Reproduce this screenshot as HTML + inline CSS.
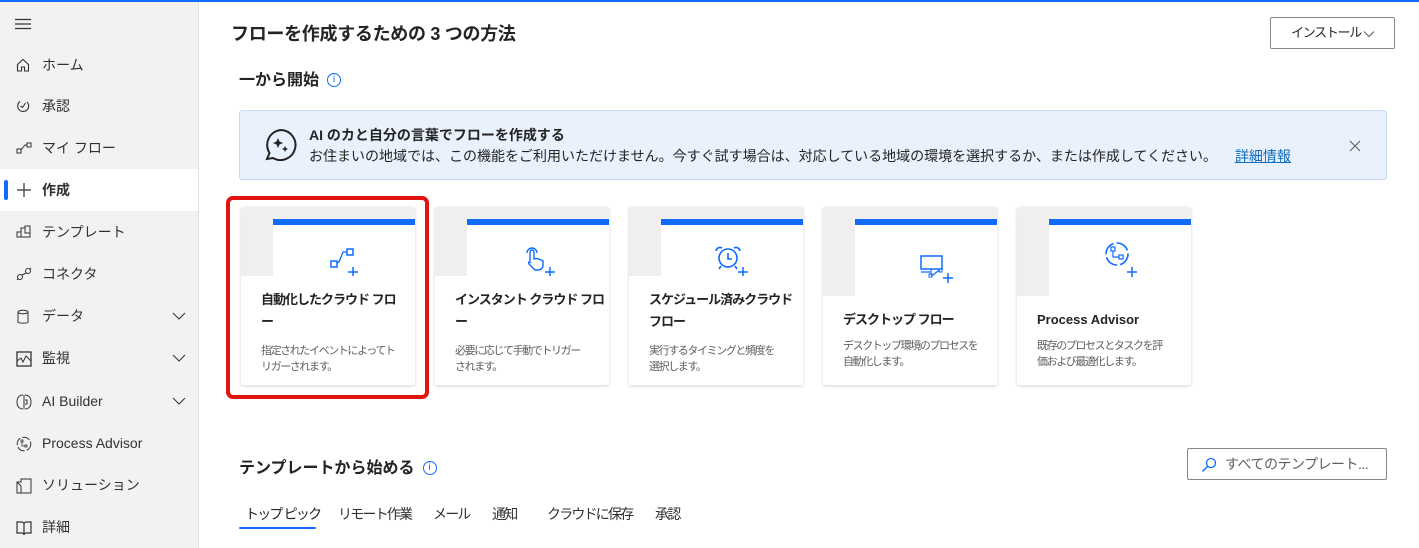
<!DOCTYPE html>
<html><head><meta charset="utf-8"><style>
*{box-sizing:border-box;margin:0;padding:0}
body{width:1419px;height:548px;overflow:hidden;background:#fff;font-family:"Liberation Sans","Noto Sans CJK JP",sans-serif;color:#242424;position:relative}
.topline{position:absolute;left:0;top:0;width:1419px;height:2px;background:#0f6cfd}
.side{position:absolute;left:0;top:0;width:199px;height:548px;background:#f3f2f1;border-right:1px solid #e1dfdd}
.item{position:absolute;left:0;width:198px;height:42px;font-size:14px;line-height:42px;color:#323130}
.item .tx{position:absolute;left:42px;top:0}
.item svg{position:absolute;left:16px;top:14px}
.item .chev{position:absolute;left:172px;top:16px}
.sel{background:#fff;font-weight:bold}
.sel:before{content:"";position:absolute;left:4px;top:11px;width:4px;height:20px;border-radius:2px;background:#0f6cfd}
.abs{position:absolute}
h1{position:absolute;left:231px;top:20px;font-size:18px;font-weight:bold;white-space:nowrap;letter-spacing:-0.3px}
h2{position:absolute;font-size:16px;font-weight:bold;white-space:nowrap}
.info{display:inline-block;width:14px;height:14px;border:1px solid #0f6cfd;border-radius:50%;color:#0f6cfd;font-size:10px;line-height:12px;text-align:center;font-weight:normal;vertical-align:3px;margin-left:8px}
.btn{position:absolute;border:1px solid #8a8886;border-radius:2px;background:#fff;font-size:14px}
.banner{position:absolute;left:239px;top:110px;width:1148px;height:70px;background:#e8f1fc;border:1px solid #c6dcf7;border-radius:3px}
.card{position:absolute;top:207px;width:174px;height:178px;background:#fff;box-shadow:0 1px 3px rgba(0,0,0,.18);border-radius:2px;overflow:hidden}
.card .grey{position:absolute;left:0;top:0;width:174px;background:#f0efee}
.card .wbox{position:absolute;left:32px;top:12px;width:142px;background:#fff;border-top:6px solid #0f6cfd}
.card .ico{position:absolute}
.card .bot{position:absolute;left:0;right:0;bottom:0;background:#fff;padding:0 18px 0 20px}
.card .t{font-size:13px;font-weight:bold;line-height:22px;color:#242424;letter-spacing:-1px;white-space:nowrap}
.card .d{font-size:11px;line-height:16px;color:#605e5c;margin-top:10px;letter-spacing:-1.4px;white-space:nowrap}
.tab{position:absolute;top:504px;font-size:14px;color:#323130;white-space:nowrap;letter-spacing:-1.8px}
</style></head><body>
<div class="side">
 <svg class="abs" style="left:14px;top:18px" width="18" height="12"><path d="M1 1.5H17M1 6H17M1 10.5H17" stroke="#323130" stroke-width="1.2"/></svg>
 <div class="item" style="top:44px"><svg width="14" height="14" viewBox="0 0 14 14"><path d="M1.5 6.5L7 1.5L12.5 6.5V13H8.5V9H5.5V13H1.5Z" fill="none" stroke="#323130" stroke-width="1.1"/></svg><span class="tx">ホーム</span></div>
 <div class="item" style="top:85px"><svg width="14" height="14" viewBox="0 0 14 14"><path d="M4 2.5A5.5 5.5 0 1 0 11 3" fill="none" stroke="#323130" stroke-width="1.1"/><path d="M4.5 7L6.5 8.5L9.5 4" fill="none" stroke="#323130" stroke-width="1.1"/></svg><span class="tx">承認</span></div>
 <div class="item" style="top:127px"><svg width="16" height="14" viewBox="0 0 16 14"><rect x="1" y="8" width="4" height="4" fill="none" stroke="#323130"/><rect x="11" y="2" width="4" height="4" fill="none" stroke="#323130"/><path d="M5 9L9 4H11" fill="none" stroke="#323130"/></svg><span class="tx">マイ フロー</span></div>
 <div class="item sel" style="top:169px"><svg width="16" height="16" viewBox="0 0 16 16" style="top:13px"><path d="M8 1V15M1 8H15" stroke="#323130" stroke-width="1.2"/></svg><span class="tx">作成</span></div>
 <div class="item" style="top:211px"><svg width="16" height="14" viewBox="0 0 16 14"><path d="M1 7H5V3H9V1H14V12H1Z M5 7V12 M9 3V8H14" fill="none" stroke="#323130"/></svg><span class="tx">テンプレート</span></div>
 <div class="item" style="top:253px"><svg width="16" height="14" viewBox="0 0 16 14"><circle cx="4" cy="10" r="2.5" fill="none" stroke="#323130"/><circle cx="12" cy="4" r="2.5" fill="none" stroke="#323130"/><path d="M6 8L10 6M1 13L2.5 11.5M13.5 2.5L15 1" stroke="#323130"/></svg><span class="tx">コネクタ</span></div>
 <div class="item" style="top:295px"><svg width="14" height="16" viewBox="0 0 14 16"><path d="M2 3V13C2 14.5 12 14.5 12 13V3" fill="none" stroke="#323130"/><ellipse cx="7" cy="3" rx="5" ry="1.8" fill="none" stroke="#323130"/></svg><span class="tx">データ</span><svg class="chev" width="14" height="10"><path d="M1 2L7 8L13 2" fill="none" stroke="#323130"/></svg></div>
 <div class="item" style="top:337px"><svg width="16" height="16" viewBox="0 0 16 16"><rect x="1" y="1" width="14" height="14" fill="none" stroke="#323130" stroke-width="1.3"/><path d="M1 10L5 7L7 11L10 5L15 10" fill="none" stroke="#323130"/></svg><span class="tx">監視</span><svg class="chev" width="14" height="10"><path d="M1 2L7 8L13 2" fill="none" stroke="#323130"/></svg></div>
 <div class="item" style="top:380px"><svg width="16" height="16" viewBox="0 0 16 16"><path d="M7 1C3 1 1 4 1 8S3 15 7 15M9 1C13 1 15 4 15 8S13 15 9 15M8 1V15M9 6H11V10H9" fill="none" stroke="#323130"/></svg><span class="tx">AI Builder</span><svg class="chev" width="14" height="10"><path d="M1 2L7 8L13 2" fill="none" stroke="#323130"/></svg></div>
 <div class="item" style="top:422px"><svg width="16" height="16" viewBox="0 0 16 16"><circle cx="8" cy="8" r="6.8" fill="none" stroke="#323130" stroke-dasharray="8 2"/><rect x="5" y="4" width="2" height="2" fill="none" stroke="#323130" stroke-width=".8"/><rect x="9" y="9" width="2" height="2" fill="none" stroke="#323130" stroke-width=".8"/><path d="M6 6V10H9" fill="none" stroke="#323130" stroke-width=".8"/></svg><span class="tx">Process Advisor</span></div>
 <div class="item" style="top:464px"><svg width="16" height="16" viewBox="0 0 16 16"><path d="M1 4H5V1H15V15H1Z M1 4L5 8V15" fill="none" stroke="#323130"/></svg><span class="tx">ソリューション</span></div>
 <div class="item" style="top:506px"><svg width="16" height="16" viewBox="0 0 16 16"><path d="M1 2H6C7 2 8 3 8 4V15C8 14 7 13 6 13H1Z M15 2H10C9 2 8 3 8 4V15C8 14 9 13 10 13H15Z" fill="none" stroke="#323130" stroke-width="1.2"/></svg><span class="tx">詳細</span></div>
</div>
<div class="topline"></div>

<h1>フローを作成するための 3 つの方法</h1>
<div class="btn" style="left:1270px;top:17px;width:125px;height:32px;line-height:30px;padding-left:20px;font-size:13px;letter-spacing:-1.3px">インストール<svg style="position:absolute;left:92px;top:12px" width="12" height="8"><path d="M1 1.5L6 6.5L11 1.5" fill="none" stroke="#605e5c"/></svg></div>
<h2 style="left:239px;top:66px">一から開始<span class="info">i</span></h2>

<div class="banner">
 <svg class="abs" style="left:24px;top:17px" width="34" height="34" viewBox="0 0 34 34"><path d="M17 2A15 15 0 1 1 9 30L3 31L5.5 25A15 15 0 0 1 17 2Z" fill="none" stroke="#242424" stroke-width="2"/><path d="M14 10L15.5 13.5L19 15L15.5 16.5L14 20L12.5 16.5L9 15L12.5 13.5Z" fill="#242424"/><path d="M21 18L22 20L24 21L22 22L21 24L20 22L18 21L20 20Z" fill="#242424"/></svg>
 <div class="abs" style="left:69px;top:14px;font-size:14px;font-weight:bold;white-space:nowrap">AI のカと自分の言葉でフローを作成する</div>
 <div class="abs" style="left:69px;top:35px;font-size:14px;white-space:nowrap;color:#242424">お住まいの地域では、この機能をご利用いただけません。今すぐ試す場合は、対応している地域の環境を選択するか、または作成してください。 <span style="color:#0f6cbd;text-decoration:underline;margin-left:14px">詳細情報</span></div>
 <svg class="abs" style="left:1109px;top:29px" width="12" height="12"><path d="M1 1L11 11M11 1L1 11" stroke="#605e5c" stroke-width="1.1"/></svg>
</div>

<div class="card" style="left:241px">
 <div class="grey" style="height:70px"></div><div class="wbox" style="height:58px"></div>
 <svg class="ico" style="left:88px;top:40px" width="32" height="30" viewBox="0 0 32 30"><rect x="2" y="14" width="6" height="6" fill="none" stroke="#0f6cfd" stroke-width="1.5"/><rect x="18" y="2" width="6" height="6" fill="none" stroke="#0f6cfd" stroke-width="1.5"/><path d="M8 16L10 15L14 5H18" fill="none" stroke="#0f6cfd" stroke-width="1.3"/><path d="M24 20V30M19 25H29" stroke="#0f6cfd" stroke-width="1.5"/></svg>
 <div class="bot" style="top:69px;padding-top:13px"><div class="t">自動化したクラウド フロ<br>ー</div><div class="d">指定されたイベントによってト<br>リガーされます。</div></div>
</div>
<div class="card" style="left:435px">
 <div class="grey" style="height:70px"></div><div class="wbox" style="height:58px"></div>
 <svg class="ico" style="left:88px;top:38px" width="34" height="32" viewBox="0 0 34 32"><path d="M7 16V7A2 2 0 0 1 11 7V14L13 13.5L16 14L18 15L20 16V20C20 23 18 25 15 25H12L6 19C5 18 6 16 7 17L8 18" fill="none" stroke="#0f6cfd" stroke-width="1.4"/><path d="M4 8A5 5 0 0 1 14 8" fill="none" stroke="#0f6cfd" stroke-width="1.4"/><path d="M27 22V32M22 27H32" stroke="#0f6cfd" stroke-width="1.5"/></svg>
 <div class="bot" style="top:69px;padding-top:13px"><div class="t">インスタント クラウド フロ<br>ー</div><div class="d">必要に応じて手動でトリガー<br>されます。</div></div>
</div>
<div class="card" style="left:629px">
 <div class="grey" style="height:70px"></div><div class="wbox" style="height:58px"></div>
 <svg class="ico" style="left:84px;top:38px" width="38" height="32" viewBox="0 0 38 32"><circle cx="15" cy="13" r="9" fill="none" stroke="#0f6cfd" stroke-width="1.6"/><path d="M15 8V14H19M3 6A4 4 0 0 1 9 3M21 3A4 4 0 0 1 27 6M8 21L6 24M22 21L24 24" fill="none" stroke="#0f6cfd" stroke-width="1.6"/><path d="M30 22V32M25 27H35" stroke="#0f6cfd" stroke-width="1.5"/></svg>
 <div class="bot" style="top:69px;padding-top:13px"><div class="t">スケジュール済みクラウド<br>フロー</div><div class="d">実行するタイミングと頻度を<br>選択します。</div></div>
</div>
<div class="card" style="left:823px">
 <div class="grey" style="height:89px"></div><div class="wbox" style="height:77px"></div>
 <svg class="ico" style="left:96px;top:47px" width="36" height="30" viewBox="0 0 36 30"><rect x="2" y="2" width="21" height="13" fill="none" stroke="#0f6cfd" stroke-width="1.5"/><path d="M12 15V21M2 18H11M12 21H14L19 17H21" fill="none" stroke="#0f6cfd" stroke-width="1.2"/><rect x="10" y="20" width="3" height="3" fill="none" stroke="#0f6cfd"/><rect x="20" y="15" width="3" height="3" fill="none" stroke="#0f6cfd"/><path d="M29 19V29M24 24H34" stroke="#0f6cfd" stroke-width="1.5"/></svg>
 <div class="bot" style="top:89px;padding-top:13px"><div class="t">デスクトップ フロー</div><div class="d" style="margin-top:7px">デスクトップ環境のプロセスを<br>自動化します。</div></div>
</div>
<div class="card" style="left:1017px">
 <div class="grey" style="height:89px"></div><div class="wbox" style="height:77px"></div>
 <svg class="ico" style="left:86px;top:34px" width="38" height="36" viewBox="0 0 38 36"><circle cx="14" cy="13" r="11" fill="none" stroke="#0f6cfd" stroke-width="1.6" stroke-dasharray="14 3"/><rect x="8" y="6" width="4" height="4" fill="none" stroke="#0f6cfd" stroke-width="1.2"/><rect x="16" y="14" width="4" height="4" fill="none" stroke="#0f6cfd" stroke-width="1.2"/><path d="M10 10V16H16" fill="none" stroke="#0f6cfd" stroke-width="1.2"/><path d="M29 26V36M24 31H34" stroke="#0f6cfd" stroke-width="1.5"/></svg>
 <div class="bot" style="top:89px;padding-top:13px"><div class="t" style="letter-spacing:0">Process Advisor</div><div class="d" style="margin-top:7px">既存のプロセスとタスクを評<br>価および最適化します。</div></div>
</div>
<div class="abs" style="left:226px;top:196px;width:203px;height:203px;border:4px solid #e3140f;border-radius:7px"></div>

<h2 style="left:239px;top:454px">テンプレートから始める<span class="info">i</span></h2>
<div class="btn" style="left:1187px;top:448px;width:200px;height:32px;line-height:30px;padding-left:37px;color:#605e5c;letter-spacing:-0.5px">すべてのテンプレート...<svg style="position:absolute;left:13px;top:8px" width="16" height="16" viewBox="0 0 16 16"><circle cx="10" cy="6" r="4.5" fill="none" stroke="#0f6cfd" stroke-width="1.3"/><path d="M7 9L1.5 14.5" stroke="#0f6cfd" stroke-width="1.5"/></svg></div>

<div class="tab" style="left:245px;color:#242424">トップ ピック</div>
<div class="abs" style="left:239px;top:527px;width:77px;height:2px;background:#0f6cfd;border-radius:1px"></div>
<div class="tab" style="left:338px">リモート作業</div>
<div class="tab" style="left:433px">メール</div>
<div class="tab" style="left:492px">通知</div>
<div class="tab" style="left:547px">クラウドに保存</div>
<div class="tab" style="left:655px">承認</div>
</body></html>
